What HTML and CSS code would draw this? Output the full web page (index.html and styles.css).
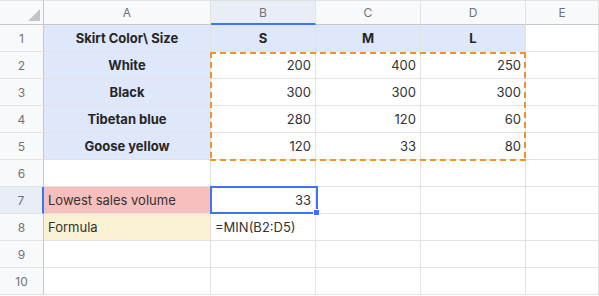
FILE: index.html
```html
<!DOCTYPE html>
<html lang="en">
<head>
    <meta charset="UTF-8">
    <meta name="viewport" content="width=device-width, initial-scale=1.0">
    <title>Skirt sales</title>
    <link rel="stylesheet" href="styles.css">
</head>
<body>
<div class="sheet">
    <!-- column headers -->
    <div class="hd corner"><span class="corner-mark"></span></div>
    <div class="hd col">A</div>
    <div class="hd col col-active">B</div>
    <div class="hd col">C</div>
    <div class="hd col">D</div>
    <div class="hd col">E</div>

    <!-- row 1 -->
    <div class="hd row">1</div>
    <div class="cell head">Skirt Color\ Size</div>
    <div class="cell head">S</div>
    <div class="cell head">M</div>
    <div class="cell head">L</div>
    <div class="cell"></div>

    <!-- row 2 -->
    <div class="hd row">2</div>
    <div class="cell head">White</div>
    <div class="cell num">200</div>
    <div class="cell num">400</div>
    <div class="cell num">250</div>
    <div class="cell"></div>

    <!-- row 3 -->
    <div class="hd row">3</div>
    <div class="cell head">Black</div>
    <div class="cell num">300</div>
    <div class="cell num">300</div>
    <div class="cell num">300</div>
    <div class="cell"></div>

    <!-- row 4 -->
    <div class="hd row">4</div>
    <div class="cell head">Tibetan blue</div>
    <div class="cell num">280</div>
    <div class="cell num">120</div>
    <div class="cell num">60</div>
    <div class="cell"></div>

    <!-- row 5 -->
    <div class="hd row">5</div>
    <div class="cell head">Goose yellow</div>
    <div class="cell num">120</div>
    <div class="cell num">33</div>
    <div class="cell num">80</div>
    <div class="cell"></div>

    <!-- row 6 -->
    <div class="hd row">6</div>
    <div class="cell"></div>
    <div class="cell"></div>
    <div class="cell"></div>
    <div class="cell"></div>
    <div class="cell"></div>

    <!-- row 7 -->
    <div class="hd row row-active">7</div>
    <div class="cell text pink">Lowest sales volume</div>
    <div class="cell num">33</div>
    <div class="cell"></div>
    <div class="cell"></div>
    <div class="cell"></div>

    <!-- row 8 -->
    <div class="hd row">8</div>
    <div class="cell text yellow">Formula</div>
    <div class="cell text">=MIN(B2:D5)</div>
    <div class="cell"></div>
    <div class="cell"></div>
    <div class="cell"></div>

    <!-- row 9 -->
    <div class="hd row">9</div>
    <div class="cell"></div>
    <div class="cell"></div>
    <div class="cell"></div>
    <div class="cell"></div>
    <div class="cell"></div>

    <!-- row 10 -->
    <div class="hd row">10</div>
    <div class="cell"></div>
    <div class="cell"></div>
    <div class="cell"></div>
    <div class="cell"></div>
    <div class="cell"></div>

    <!-- copied range and active cell, drawn over the grid -->
    <div class="copy-range"></div>
    <div class="selection"><span class="handle"></span></div>
</div>
</body>
</html>
```

FILE: styles.css
```css
body {
    margin: 0;
    background: #ffffff;
    font-family: Inter, "Liberation Sans", Arial, sans-serif;
}

.sheet {
    position: relative;
    display: grid;
    grid-template-columns: 44px 167px 105px 105px 105px 73px;
    grid-template-rows: 25px repeat(10, 27px);
    width: 599px;
    font-size: 13px;
    color: #333;
}

.sheet > div {
    box-sizing: border-box;
    border-right: 1px solid #e2e2e2;
    border-bottom: 1px solid #e2e2e2;
    display: flex;
    align-items: center;
    white-space: nowrap;
    overflow: hidden;
}

/* headers */
.hd {
    background: #f8f9fa;
    color: #6f7378;
    font-size: 12px;
    justify-content: center;
}

.sheet > .col,
.sheet > .corner {
    border-top: 1px solid #e2e2e2;
    border-bottom: 1px solid #c8c8c8;
}

.sheet > .row,
.sheet > .corner {
    border-right: 1px solid #c8c8c8;
}

.corner {
    position: relative;
}

.corner-mark {
    position: absolute;
    right: 3px;
    bottom: 3px;
    width: 0;
    height: 0;
    border-left: 12px solid transparent;
    border-bottom: 12px solid #c4c4c4;
}

.sheet > .col-active {
    background: #e8edf6;
    border-bottom: 2px solid #3d74f5;
}

.sheet > .row-active {
    background: #e8edf6;
    border-right: 2px solid #3d74f5;
}

/* cells */
.cell {
    padding: 0 4px;
}

.head {
    background: #dfe7fb;
    font-weight: bold;
    justify-content: center;
    color: #262626;
}

.num {
    justify-content: flex-end;
}

.text {
    justify-content: flex-start;
}

.pink {
    background: #f8bfbf;
}

.yellow {
    background: #faf0d2;
}

/* overlays */
.sheet > .copy-range {
    position: absolute;
    grid-column: 3 / 6;
    grid-row: 3 / 7;
    top: 0;
    left: -1px;
    right: 0;
    bottom: -1px;
    border: none;
    pointer-events: none;
    background:
        repeating-linear-gradient(90deg, #ee9330 0 6px, transparent 6px 10px) top left / 100% 2px no-repeat,
        repeating-linear-gradient(90deg, #ee9330 0 6px, transparent 6px 10px) bottom left / 100% 2px no-repeat,
        repeating-linear-gradient(180deg, #ee9330 0 6px, transparent 6px 10px) top left / 2px 100% no-repeat,
        repeating-linear-gradient(180deg, #ee9330 0 6px, transparent 6px 10px) top right / 2px 100% no-repeat;
}

.sheet > .selection {
    position: absolute;
    grid-column: 3 / 4;
    grid-row: 8 / 9;
    top: -1px;
    left: -1px;
    right: -2px;
    bottom: 0;
    border: 2px solid #3d74f5;
    overflow: visible;
    pointer-events: none;
}

.handle {
    position: absolute;
    right: -4px;
    bottom: -4px;
    width: 5px;
    height: 5px;
    background: #3d74f5;
    border: 1px solid #ffffff;
}
```
